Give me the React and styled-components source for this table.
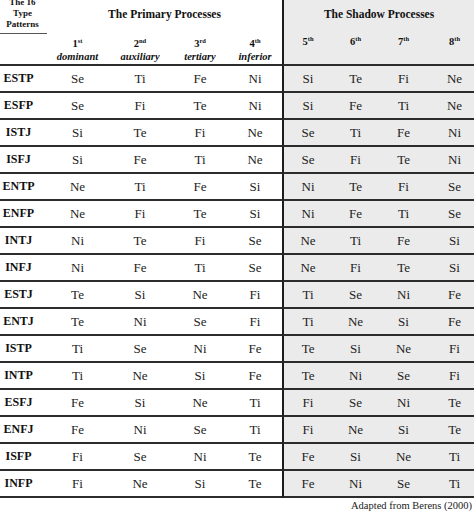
import React from 'react';
import styled, { createGlobalStyle } from 'styled-components';

const GlobalStyle = createGlobalStyle`
  html, body {
    margin: 0;
    padding: 0;
    background: #ffffff;
  }
  body {
    font-family: "Liberation Serif", "Times New Roman", serif;
    color: #1a1a1a;
  }
`;

const Page = styled.div`
  width: 474px;
  overflow: hidden;
`;

const Table = styled.table`
  width: 474px;
  table-layout: fixed;
  border-collapse: separate;
  border-spacing: 0;
`;

const Cell = styled.td`
  padding: 0 0 0 ${(p) => (p.$last ? '7px' : '0')};
  text-align: center;
  vertical-align: middle;
  font-size: 13px;
  color: #222;
  background: ${(p) => (p.$shadow ? '#ebebeb' : '#ffffff')};
  border-left: ${(p) => (p.$divider ? '2px solid #1c1c1c' : 'none')};
  border-bottom: ${(p) => (p.$line ? '2px solid #2c2c2c' : 'none')};
`;

const TypeCell = styled(Cell)`
  font-weight: bold;
  font-size: 12px;
  color: #111;
  padding-right: 10px;
`;

const BodyRow = styled.tr`
  height: 27px;
`;

const TopRow = styled.tr`
  height: 36px;
`;

const SubRow = styled.tr`
  height: 30px;
`;

const PatternsLabel = styled.div`
  font-weight: bold;
  font-size: 9px;
  line-height: 11px;
  color: #111;
  text-align: center;
  padding-right: 2px;
  padding-bottom: 3px;
  margin-top: -5px;
  border-bottom: 1.5px solid #555;
`;

const GroupTitle = styled.div`
  font-weight: bold;
  font-size: 11.5px;
  color: #111;
  margin-top: -8px;
`;

const Ordinal = styled.div`
  font-weight: bold;
  font-size: 10.5px;
  color: #111;
  line-height: 12px;
  margin-top: ${(p) => (p.$solo ? '-14px' : '0')};

  sup {
    font-size: 6.5px;
    vertical-align: 4px;
    line-height: 0;
  }
`;

const Role = styled.div`
  font-weight: bold;
  font-style: italic;
  font-size: 10.5px;
  line-height: 13px;
  color: #111;
`;

const Footer = styled.div`
  text-align: right;
  font-size: 10.5px;
  line-height: 13px;
  color: #222;
  padding-right: 2px;
  margin-top: 1px;
`;

const rows = [
  ['ESTP', 'Se', 'Ti', 'Fe', 'Ni', 'Si', 'Te', 'Fi', 'Ne'],
  ['ESFP', 'Se', 'Fi', 'Te', 'Ni', 'Si', 'Fe', 'Ti', 'Ne'],
  ['ISTJ', 'Si', 'Te', 'Fi', 'Ne', 'Se', 'Ti', 'Fe', 'Ni'],
  ['ISFJ', 'Si', 'Fe', 'Ti', 'Ne', 'Se', 'Fi', 'Te', 'Ni'],
  ['ENTP', 'Ne', 'Ti', 'Fe', 'Si', 'Ni', 'Te', 'Fi', 'Se'],
  ['ENFP', 'Ne', 'Fi', 'Te', 'Si', 'Ni', 'Fe', 'Ti', 'Se'],
  ['INTJ', 'Ni', 'Te', 'Fi', 'Se', 'Ne', 'Ti', 'Fe', 'Si'],
  ['INFJ', 'Ni', 'Fe', 'Ti', 'Se', 'Ne', 'Fi', 'Te', 'Si'],
  ['ESTJ', 'Te', 'Si', 'Ne', 'Fi', 'Ti', 'Se', 'Ni', 'Fe'],
  ['ENTJ', 'Te', 'Ni', 'Se', 'Fi', 'Ti', 'Ne', 'Si', 'Fe'],
  ['ISTP', 'Ti', 'Se', 'Ni', 'Fe', 'Te', 'Si', 'Ne', 'Fi'],
  ['INTP', 'Ti', 'Ne', 'Si', 'Fe', 'Te', 'Ni', 'Se', 'Fi'],
  ['ESFJ', 'Fe', 'Si', 'Ne', 'Ti', 'Fi', 'Se', 'Ni', 'Te'],
  ['ENFJ', 'Fe', 'Ni', 'Se', 'Ti', 'Fi', 'Ne', 'Si', 'Te'],
  ['ISFP', 'Fi', 'Se', 'Ni', 'Te', 'Fe', 'Si', 'Ne', 'Ti'],
  ['INFP', 'Fi', 'Ne', 'Si', 'Te', 'Fe', 'Ni', 'Se', 'Ti'],
];

const primary = [
  ['1', 'st', 'dominant'],
  ['2', 'nd', 'auxiliary'],
  ['3', 'rd', 'tertiary'],
  ['4', 'th', 'inferior'],
];

const shadow = [
  ['5', 'th'],
  ['6', 'th'],
  ['7', 'th'],
  ['8', 'th'],
];

const widths = [47, 61, 64, 56, 54, 50, 47, 49, 46];

const App = () => (
  <Page>
    <GlobalStyle />
    <Table>
      <colgroup>
        {widths.map((w, i) => (
          <col key={i} style={{ width: w }} />
        ))}
      </colgroup>
      <thead>
        <TopRow>
          <Cell>
            <PatternsLabel>
              The 16
              <br />
              Type
              <br />
              Patterns
            </PatternsLabel>
          </Cell>
          <Cell colSpan={4}>
            <GroupTitle>The Primary Processes</GroupTitle>
          </Cell>
          <Cell colSpan={4} $shadow $divider>
            <GroupTitle>The Shadow Processes</GroupTitle>
          </Cell>
        </TopRow>
        <SubRow>
          <Cell $line />
          {primary.map(([n, s, role]) => (
            <Cell key={n} $line>
              <Ordinal>
                {n}
                <sup>{s}</sup>
              </Ordinal>
              <Role>{role}</Role>
            </Cell>
          ))}
          {shadow.map(([n, s], i) => (
            <Cell key={n} $line $shadow $divider={i === 0} $last={i === 3}>
              <Ordinal $solo>
                {n}
                <sup>{s}</sup>
              </Ordinal>
            </Cell>
          ))}
        </SubRow>
      </thead>
      <tbody>
        {rows.map(([type, ...fns]) => (
          <BodyRow key={type}>
            <TypeCell $line>{type}</TypeCell>
            {fns.map((f, i) => (
              <Cell
                key={i}
                $line
                $shadow={i >= 4}
                $divider={i === 4}
                $last={i === 7}
              >
                {f}
              </Cell>
            ))}
          </BodyRow>
        ))}
      </tbody>
    </Table>
    <Footer>Adapted from Berens (2000)</Footer>
  </Page>
);

export default App;
